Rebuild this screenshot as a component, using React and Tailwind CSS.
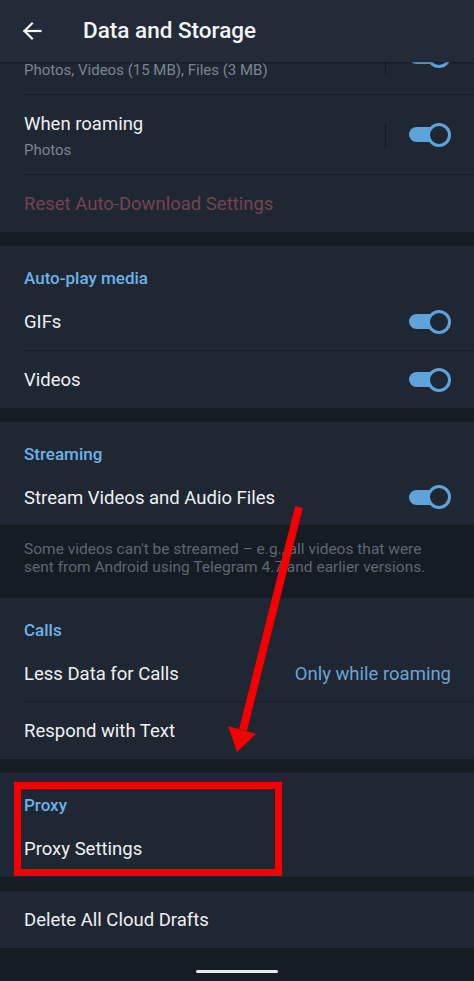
import React from "react";

const Toggle = () => (
    <div className="flex items-center">
        <div className="w-[38px] h-[15px] rounded-full bg-[#5fa3dc]" />
        <div className="-ml-[20px] w-[24px] h-[24px] rounded-full border-[3px] border-[#5fa3dc] bg-[#1f2733]" />
    </div>
);

const Gap = () => <div className="h-[14px] bg-[#161c24]" />;

const SectionHeader = ({ children }) => (
    <div className="h-[47px] pt-[21px] px-[24px] text-[17px] leading-[22px] font-medium text-[#6db2e8]">
        {children}
    </div>
);

const Separator = () => (
    <div className="pl-[24px]">
        <div className="h-px bg-[#161d25]" />
    </div>
);

const Row = ({ label, right, height = "h-[57px]" }) => (
    <div className={`${height} flex items-center justify-between pl-[24px] pr-[23px]`}>
        <span className="text-[18.5px] text-[#eef1f4] pt-[3px]">{label}</span>
        {right}
    </div>
);

const App = () => {
    return (
        <div className="relative w-[474px] h-[981px] overflow-hidden bg-[#161c24] font-['Roboto',sans-serif]">
            {/* top bar */}
            <div className="relative z-10 h-[62px] flex items-center bg-[#222b37] shadow-[0_1px_2px_rgba(0,0,0,0.3)]">
                <div className="w-[83px] pl-[22px] flex items-center">
                    <svg width="20" height="20" viewBox="0 0 20 20" fill="none" stroke="#f2f4f6" strokeWidth="2.2" strokeLinecap="square">
                        <path d="M18.5 10H2.5" />
                        <path d="M10 2.5L2.5 10L10 17.5" />
                    </svg>
                </div>
                <span className="text-[22.5px] font-medium text-[#f3f5f7]">Data and Storage</span>
            </div>

            <div className="bg-[#1f2733]">
                {/* row scrolled under the header */}
                <div className="h-[32px] overflow-hidden flex justify-between pl-[24px] pr-[23px]">
                    <span className="text-[15px] leading-[20px] text-[#7b8592] -mt-[2px]">Photos, Videos (15 MB), Files (3 MB)</span>
                    <div className="flex items-start gap-[23px]">
                        <div className="w-px h-[12px] bg-[#141a21]" />
                        <div className="-mt-[18px]">
                            <Toggle />
                        </div>
                    </div>
                </div>
                <Separator />
                <div className="h-[79px] flex items-center justify-between pl-[24px] pr-[23px]">
                    <div className="self-start flex flex-col pt-[17px]">
                        <span className="text-[18.5px] leading-[24px] text-[#eef1f4]">When roaming</span>
                        <span className="text-[15px] leading-[20px] text-[#7b8592] mt-[4px]">Photos</span>
                    </div>
                    <div className="flex items-center gap-[23px]">
                        <div className="w-px h-[26px] bg-[#141a21]" />
                        <Toggle />
                    </div>
                </div>
                <Separator />
                <div className="h-[57px] flex items-center pl-[24px]">
                    <span className="text-[18.5px] text-[#734452] pt-[3px]">Reset Auto-Download Settings</span>
                </div>
            </div>
            <Gap />

            <div className="bg-[#1f2733]">
                <SectionHeader>Auto-play media</SectionHeader>
                <Row label="GIFs" right={<Toggle />} />
                <Separator />
                <Row label="Videos" right={<Toggle />} />
            </div>
            <Gap />

            <div className="bg-[#1f2733]">
                <SectionHeader>Streaming</SectionHeader>
                <Row label="Stream Videos and Audio Files" right={<Toggle />} height="h-[56px]" />
            </div>
            <div className="h-[73px] pt-[15px] pl-[24px] pr-[20px] text-[15.5px] leading-[18px] text-[#5e6772]">
                Some videos can't be streamed – e.g., all videos that were sent from Android using Telegram 4.7 and earlier versions.
            </div>

            <div className="bg-[#1f2733]">
                <SectionHeader>Calls</SectionHeader>
                <Row
                    label="Less Data for Calls"
                    height="h-[56px]"
                    right={<span className="text-[18.5px] text-[#6aa5d6] pt-[3px]">Only while roaming</span>}
                />
                <Separator />
                <Row label="Respond with Text" />
            </div>
            <Gap />

            <div className="bg-[#1f2733]">
                <SectionHeader>Proxy</SectionHeader>
                <Row label="Proxy Settings" />
            </div>
            <Gap />

            <div className="bg-[#1f2733]">
                <Row label="Delete All Cloud Drafts" />
            </div>

            <div className="h-[33px] flex justify-center pt-[22px]">
                <div className="w-[82px] h-[3px] rounded-full bg-[#e8eaec]" />
            </div>

            {/* red annotations drawn over the screenshot */}
            <svg className="absolute inset-0 z-20 pointer-events-none" width="474" height="981" viewBox="0 0 474 981">
                <rect x="17.5" y="785.5" width="261" height="87" fill="none" stroke="#f50000" strokeWidth="7" />
                <line x1="299" y1="507" x2="243" y2="730" stroke="#f50000" strokeWidth="8" />
                <polygon points="228,726 256,734 237,752" fill="#f50000" />
            </svg>
        </div>
    );
};

export default App;
